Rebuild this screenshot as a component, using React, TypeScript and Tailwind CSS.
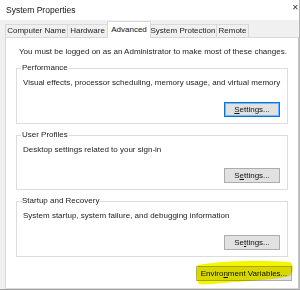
import React from "react";

const font = { fontFamily: '"Liberation Sans", Arial, sans-serif' };

function Btn({ children, focused = false, className = "" }: { children: React.ReactNode; focused?: boolean; className?: string }) {
    return (
        <div
            className={
                "flex items-center justify-center h-[15px] text-[8px] text-[#111] bg-[#e1e1e1] " +
                (focused ? "border border-[#0078d7] shadow-[inset_0_0_0_1px_#7eb4ea]" : "border border-[#adadad]") +
                " " +
                className
            }
        >
            {children}
        </div>
    );
}

function Group({ label, text, button, h }: { label: string; text: string; button: React.ReactNode; h: string }) {
    return (
        <div className={"relative mx-[10px] border border-[#dcdcdc] flex flex-col " + h}>
            <span className="absolute -top-[6px] left-[4px] bg-white px-[1px] text-[8px] leading-[10px] text-[#222]">{label}</span>
            <p className="mt-[8px] ml-[6px] text-[8px] leading-[12px] text-[#222]">{text}</p>
            <div className="mt-auto mb-[6px] mr-[7px] self-end">{button}</div>
        </div>
    );
}

export default function App() {
    const tabs = [
        { name: "Computer Name", w: "w-[63px]" },
        { name: "Hardware", w: "w-[41px]" },
        { name: "Advanced", w: "w-[44px]", active: true },
        { name: "System Protection", w: "w-[68px]" },
        { name: "Remote", w: "w-[33px]" },
    ];

    return (
        <div className="relative w-[300px] h-[290px] overflow-hidden bg-[#f0f0f0] border-b border-[#a0a0a0] border-r border-r-[#b5b5b5]" style={font}>
            {/* Title bar */}
            <div className="h-[20px] bg-white flex items-center pl-[6px] text-[8.5px] text-[#111]">System Properties</div>
            <span className="absolute top-[3px] left-[292px] text-[8px] leading-[10px] text-[#333]">✕</span>

            {/* Tabs */}
            <div className="flex items-end h-[17px] pl-[5px] mt-[1px]">
                {tabs.map((t) =>
                    t.active ? (
                        <div
                            key={t.name}
                            className={"relative z-10 -mx-[1px] h-[17px] bg-white border border-b-0 border-[#d9d9d9] flex items-center justify-center text-[8px] text-[#111] " + t.w}
                        >
                            {t.name}
                        </div>
                    ) : (
                        <div
                            key={t.name}
                            className={"h-[14px] border border-[#d9d9d9] -ml-[1px] first:ml-0 bg-[#f0f0f0] flex items-center justify-center text-[8px] text-[#222] " + t.w}
                        >
                            {t.name}
                        </div>
                    )
                )}
            </div>

            {/* Tab panel */}
            <div className="-mt-[1px] ml-[5px] w-[294px] h-[252px] bg-white border border-[#d9d9d9] border-r-[#c8c8c8]">
                <p className="mt-[8px] ml-[13px] text-[8px] leading-[12px] text-[#222]">
                    You must be logged on as an Administrator to make most of these changes.
                </p>

                <div className="mt-[10px]">
                    <Group
                        label="Performance"
                        text="Visual effects, processor scheduling, memory usage, and virtual memory"
                        h="h-[56px]"
                        button={
                            <Btn focused className="w-[56px]">
                                <span>
                                    <span className="underline">S</span>ettings...
                                </span>
                            </Btn>
                        }
                    />
                </div>

                <div className="mt-[11px]">
                    <Group
                        label="User Profiles"
                        text="Desktop settings related to your sign-in"
                        h="h-[55px]"
                        button={
                            <Btn className="w-[56px]">
                                <span>
                                    S<span className="underline">e</span>ttings...
                                </span>
                            </Btn>
                        }
                    />
                </div>

                <div className="mt-[11px]">
                    <Group
                        label="Startup and Recovery"
                        text="System startup, system failure, and debugging information"
                        h="h-[56px]"
                        button={
                            <Btn className="w-[56px]">
                                <span>
                                    Se<span className="underline">t</span>tings...
                                </span>
                            </Btn>
                        }
                    />
                </div>

                <div className="mt-[9px] flex justify-end mr-[6px]">
                    <Btn className="w-[96px]">
                        <span>
                            Enviro<span className="underline">n</span>ment Variables...
                        </span>
                    </Btn>
                </div>
            </div>

            {/* Highlighter mark */}
            <svg className="absolute left-[192px] top-[256px] mix-blend-multiply" width="106" height="32" viewBox="0 0 106 32">
                <defs>
                    <filter id="soft" x="-10%" y="-30%" width="120%" height="160%">
                        <feGaussianBlur stdDeviation="0.7" />
                    </filter>
                </defs>
                <path
                    d="M6 9 C 30 5, 62 4, 98 6 C 102 8, 102 16, 98 20 C 82 24, 52 25, 32 27 C 20 28, 11 29, 7 28 C 4 22, 4 14, 6 9 Z"
                    fill="#f5f500"
                    filter="url(#soft)"
                />
            </svg>
        </div>
    );
}
